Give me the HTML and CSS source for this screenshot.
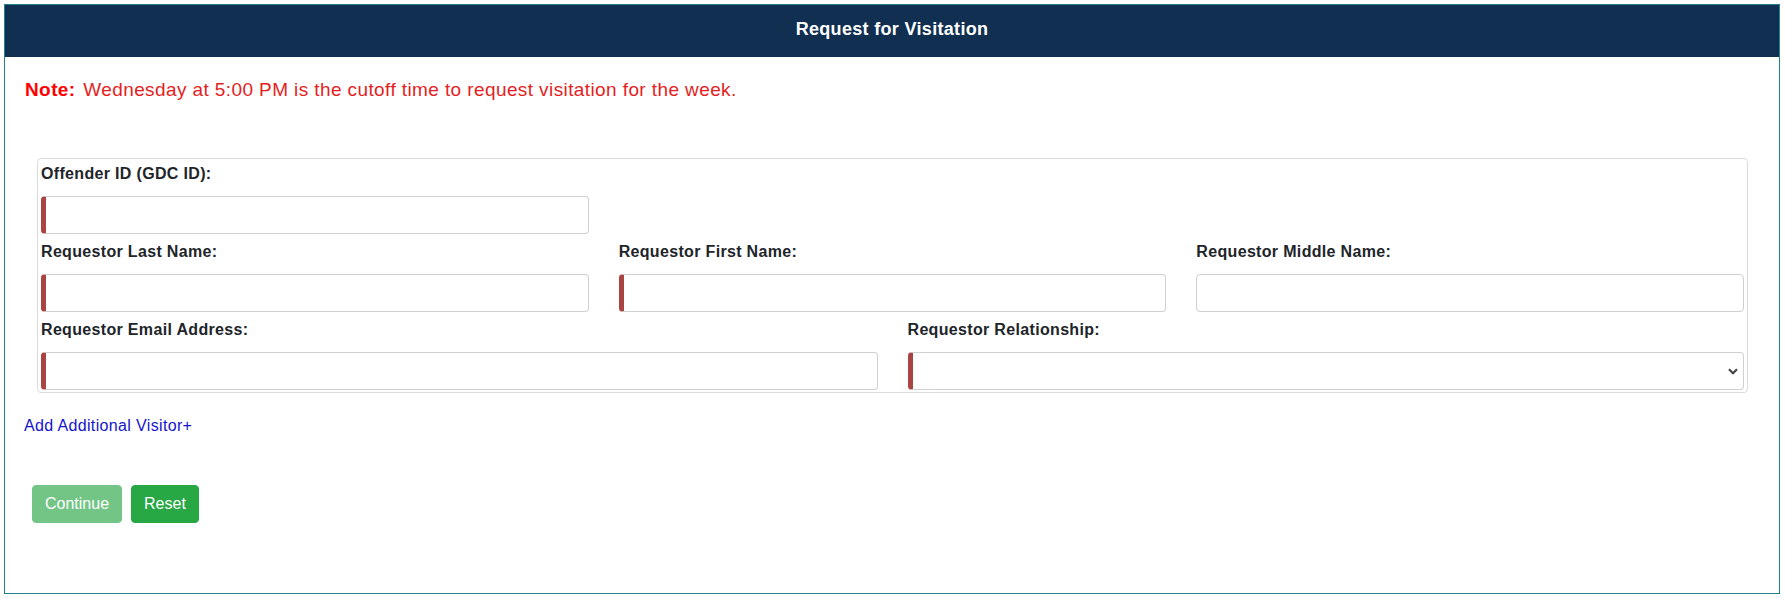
FILE: index.html
```html
<!DOCTYPE html>
<html lang="en">
<head>
<meta charset="utf-8">
<title>Request for Visitation</title>
<link rel="stylesheet" href="styles.css">
</head>
<body>
<div class="panel">
  <div class="panel-heading">Request for Visitation</div>
  <div class="panel-body">
    <p class="note"><span class="note-label">Note:</span> Wednesday at 5:00 PM is the cutoff time to request visitation for the week.</p>
    <div class="visitor-box">
      <div class="grid3">
        <div class="field">
          <label class="field-label">Offender ID (GDC ID):</label>
          <input class="form-control required" type="text">
        </div>
      </div>
      <div class="grid3">
        <div class="field">
          <label class="field-label">Requestor Last Name:</label>
          <input class="form-control required" type="text">
        </div>
        <div class="field">
          <label class="field-label">Requestor First Name:</label>
          <input class="form-control required" type="text">
        </div>
        <div class="field">
          <label class="field-label">Requestor Middle Name:</label>
          <input class="form-control" type="text">
        </div>
      </div>
      <div class="grid2">
        <div class="field">
          <label class="field-label">Requestor Email Address:</label>
          <input class="form-control required" type="text">
        </div>
        <div class="field">
          <label class="field-label">Requestor Relationship:</label>
          <div class="select-wrap">
            <select class="form-control required select"><option></option></select>
            <svg class="chevron" width="10" height="7" viewBox="0 0 10 7"><path d="M1 1.2 L5 5.2 L9 1.2" fill="none" stroke="#444" stroke-width="2.2"/></svg>
          </div>
        </div>
      </div>
    </div>
    <a class="add-link" href="#">Add Additional Visitor+</a>
    <div class="actions">
      <button class="btn btn-success" disabled>Continue</button>
      <button class="btn btn-success">Reset</button>
    </div>
  </div>
</div>
</body>
</html>
```
FILE: styles.css
```css
* { box-sizing: border-box; }
html, body { margin: 0; padding: 0; background: #fff; }
body {
  font-family: "Liberation Sans", Arial, sans-serif;
  color: #212529;
  padding-top: 4px;
}
.panel {
  margin: 0 5px 0 4px;
  border: 1px solid #22808e;
}
.panel-heading {
  background: #102f51;
  color: #fff;
  font-weight: bold;
  font-size: 18px;
  line-height: 27px;
  letter-spacing: 0.32px;
  text-align: center;
  padding: 11px 0 14px;
}
.panel-body {
  padding: 20px 19px 70px 19px;
}
.note {
  margin: 0;
  font-size: 19px;
  line-height: 26px;
  letter-spacing: 0.4px;
  color: #e41e1e;
  padding-left: 1px;
}
.note-label {
  color: #ff0000;
  font-weight: bold;
  margin-right: 2px;
}
.visitor-box {
  margin: 55px 12px 0 13px;
  border: 1px solid #dcdcdc;
  border-radius: 4px;
  padding: 3px 3px 2px 3px;
}
.grid3 {
  display: grid;
  grid-template-columns: 1fr 1fr 1fr;
  column-gap: 30px;
  margin-bottom: 6px;
}
.grid2 {
  display: grid;
  grid-template-columns: 1fr 1fr;
  column-gap: 30px;
}
.field {
  display: flex;
  flex-direction: column;
}
.field-label {
  font-size: 16px;
  font-weight: bold;
  line-height: 24px;
  letter-spacing: 0.33px;
  margin-bottom: 10px;
}
.form-control {
  display: block;
  width: 100%;
  height: 38px;
  padding: 6px 12px;
  font-family: inherit;
  font-size: 16px;
  line-height: 24px;
  color: #495057;
  background: #fff;
  border: 1px solid #d0d0d0;
  border-radius: 4px;
  outline: none;
}
.form-control.required {
  border-left: 5px solid #a94442;
}
.select-wrap {
  position: relative;
}
.select {
  -webkit-appearance: none;
  appearance: none;
}
.chevron {
  position: absolute;
  right: 6px;
  top: 16px;
}
.add-link {
  display: block;
  margin-top: 21px;
  font-size: 16px;
  line-height: 24px;
  letter-spacing: 0.35px;
  color: #1414cc;
  text-decoration: none;
  width: max-content;
}
.actions {
  display: flex;
  gap: 9px;
  margin: 47px 0 0 8px;
}
.btn {
  font-family: inherit;
  font-size: 16px;
  line-height: 24px;
  padding: 6px 12px;
  border: 1px solid #28a745;
  border-radius: 4px;
  color: #fff;
  background: #28a745;
  cursor: pointer;
}
.btn:disabled {
  opacity: 0.65;
  cursor: default;
}
```
